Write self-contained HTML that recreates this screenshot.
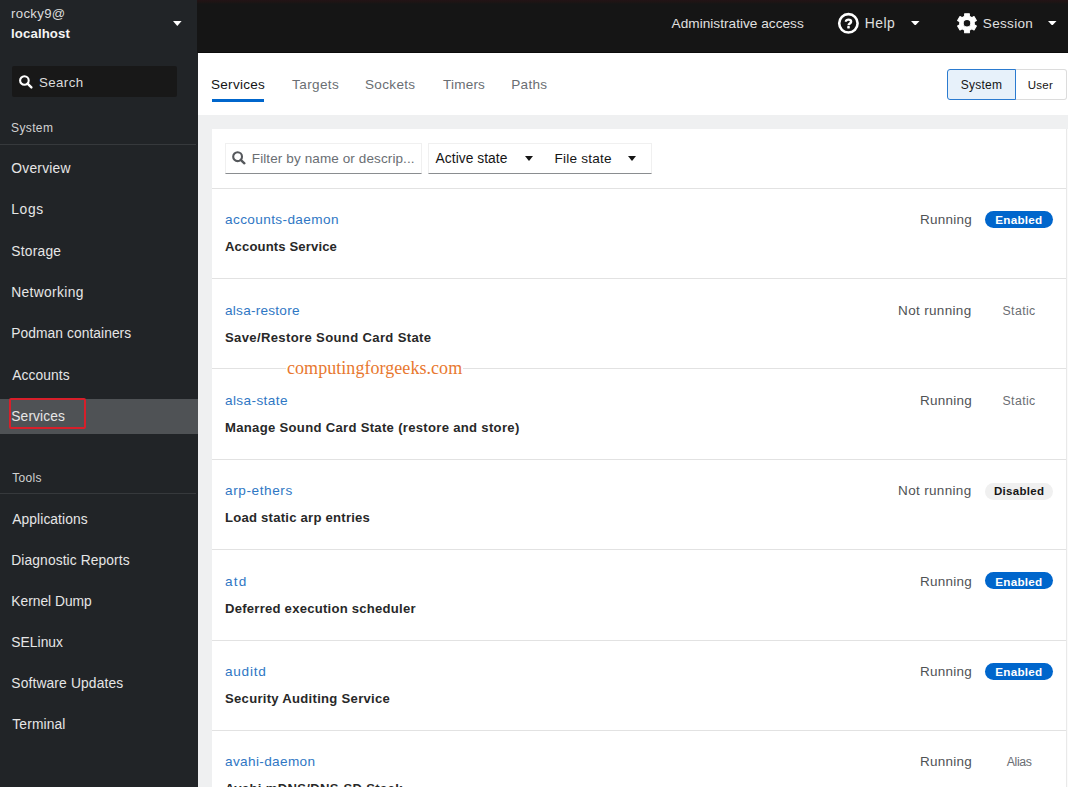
<!DOCTYPE html>
<html><head><meta charset="utf-8"><style>
html,body{margin:0;padding:0;width:1068px;height:787px;overflow:hidden;background:#fff;font-family:"Liberation Sans", sans-serif}
.t{position:absolute;white-space:nowrap;line-height:1}
</style></head><body>
<div style="position:absolute;left:0px;top:0px;width:198px;height:787px;background:#212427;"></div>
<div class="t" style="left:11.00px;top:7.00px;font-size:13.2px;color:#dcdcdc;font-weight:400;letter-spacing:0.333px;">rocky9@</div>
<div class="t" style="left:11.00px;top:27.00px;font-size:13.2px;color:#f4f4f4;font-weight:700;letter-spacing:0.125px;">localhost</div>
<svg style="position:absolute;left:173.3px;top:21px" width="8.6" height="5" viewBox="0 0 8.6 5"><path d="M0 0H8.6L4.3 5Z" fill="#fff"/></svg>
<div style="position:absolute;left:12px;top:66px;width:165px;height:31px;background:#181818;border-radius:2px"></div>
<svg style="position:absolute;left:18px;top:74px" width="16" height="16" viewBox="0 0 16 16"><circle cx="6.4" cy="6.5" r="4.3" fill="none" stroke="#fff" stroke-width="2.1"/><path d="M9.5 9.6L13.4 13.4" stroke="#fff" stroke-width="2.4" stroke-linecap="round"/></svg>
<div class="t" style="left:39.00px;top:76.00px;font-size:13.3px;color:#dcdcdc;font-weight:400;letter-spacing:0.400px;">Search</div>
<div class="t" style="left:11.00px;top:122.00px;font-size:12px;color:#d2d2d2;font-weight:400;letter-spacing:0.380px;">System</div>
<div style="position:absolute;left:0px;top:144px;width:196px;height:1px;background:#36393c;"></div>
<div style="position:absolute;left:0px;top:399px;width:198px;height:35px;background:#4f5255;"></div>
<div class="t" style="left:11.30px;top:162.00px;font-size:13.8px;color:#e6e6e6;font-weight:400;letter-spacing:0.243px;">Overview</div>
<div class="t" style="left:11.30px;top:203.00px;font-size:13.8px;color:#e6e6e6;font-weight:400;letter-spacing:0.633px;">Logs</div>
<div class="t" style="left:11.30px;top:245.00px;font-size:13.8px;color:#e6e6e6;font-weight:400;letter-spacing:0.233px;">Storage</div>
<div class="t" style="left:11.30px;top:286.00px;font-size:13.8px;color:#e6e6e6;font-weight:400;letter-spacing:0.333px;">Networking</div>
<div class="t" style="left:11.30px;top:327.00px;font-size:13.8px;color:#e6e6e6;font-weight:400;letter-spacing:0.062px;">Podman containers</div>
<div class="t" style="left:12.30px;top:369.00px;font-size:13.8px;color:#e6e6e6;font-weight:400;letter-spacing:0.086px;">Accounts</div>
<div class="t" style="left:11.30px;top:410.00px;font-size:13.8px;color:#e6e6e6;font-weight:400;letter-spacing:0.114px;">Services</div>
<div style="position:absolute;left:9px;top:398px;width:73px;height:27px;background:transparent;border:2px solid #d71f2a;border-radius:2px"></div>
<div class="t" style="left:12.30px;top:472.00px;font-size:12px;color:#d2d2d2;font-weight:400;letter-spacing:0.300px;">Tools</div>
<div style="position:absolute;left:0px;top:493px;width:196px;height:1px;background:#36393c;"></div>
<div class="t" style="left:12.30px;top:513.00px;font-size:13.8px;color:#e6e6e6;font-weight:400;letter-spacing:0.082px;">Applications</div>
<div class="t" style="left:11.30px;top:554.00px;font-size:13.8px;color:#e6e6e6;font-weight:400;letter-spacing:0.106px;">Diagnostic Reports</div>
<div class="t" style="left:11.30px;top:595.00px;font-size:13.8px;color:#e6e6e6;font-weight:400;letter-spacing:-0.010px;">Kernel Dump</div>
<div class="t" style="left:11.30px;top:636.00px;font-size:13.8px;color:#e6e6e6;font-weight:400;letter-spacing:0.050px;">SELinux</div>
<div class="t" style="left:11.30px;top:677.00px;font-size:13.8px;color:#e6e6e6;font-weight:400;letter-spacing:0.147px;">Software Updates</div>
<div class="t" style="left:12.30px;top:718.00px;font-size:13.8px;color:#e6e6e6;font-weight:400;letter-spacing:0.143px;">Terminal</div>
<div style="position:absolute;left:197px;top:0px;width:871px;height:53px;background:#151515;"></div>
<div style="position:absolute;left:197px;top:0px;width:871px;height:4px;background:linear-gradient(#221316,#1f1414 40%,#151515);"></div>
<div style="position:absolute;left:198px;top:52px;width:870px;height:1px;background:#0c0c0c;"></div>
<div class="t" style="left:671.60px;top:17.00px;font-size:13.6px;color:#e0e0e0;font-weight:400;letter-spacing:0.035px;">Administrative access</div>
<svg style="position:absolute;left:837px;top:12px" width="23" height="23" viewBox="0 0 23 23"><circle cx="11.4" cy="11.35" r="9.2" fill="none" stroke="#fff" stroke-width="2.6"/><path d="M8.9 9.8C8.9 8.3 10 7.6 11.5 7.6C13 7.6 14.1 8.5 14.1 9.7C14.1 11.4 11.6 11.5 11.6 13.3" fill="none" stroke="#fff" stroke-width="2.4"/><rect x="10.2" y="14" width="2.6" height="2.4" rx="0.4" fill="#fff"/></svg>
<div class="t" style="left:864.70px;top:17.00px;font-size:13.86px;color:#e0e0e0;font-weight:400;letter-spacing:0.500px;">Help</div>
<svg style="position:absolute;left:911.2px;top:20.5px" width="8.5" height="4.6" viewBox="0 0 8.5 4.6"><path d="M0 0H8.5L4.25 4.6Z" fill="#fff"/></svg>
<svg style="position:absolute;left:957.4px;top:13px" width="20" height="21" viewBox="0 0 20 21"><path d="M7.65 3.34 L7.65 0.79 L12.35 0.79 L12.35 3.34 L13.65 3.93 L14.81 4.76 L17.02 3.48 L19.37 7.55 L17.16 8.83 L17.30 10.25 L17.16 11.67 L19.37 12.95 L17.02 17.02 L14.81 15.74 L13.65 16.57 L12.35 17.16 L12.35 19.71 L7.65 19.71 L7.65 17.16 L6.35 16.57 L5.19 15.74 L2.98 17.02 L0.63 12.95 L2.84 11.67 L2.70 10.25 L2.84 8.83 L0.63 7.55 L2.98 3.48 L5.19 4.76 L6.35 3.93Z M10 6.4A3.85 3.85 0 1 0 10 14.1A3.85 3.85 0 1 0 10 6.4Z" fill="#fff" fill-rule="evenodd" stroke="#fff" stroke-width="1.1" stroke-linejoin="round"/></svg>
<div class="t" style="left:982.80px;top:17.00px;font-size:13.5px;color:#e0e0e0;font-weight:400;letter-spacing:0.333px;">Session</div>
<svg style="position:absolute;left:1048.3px;top:20.5px" width="8.5" height="4.6" viewBox="0 0 8.5 4.6"><path d="M0 0H8.5L4.25 4.6Z" fill="#fff"/></svg>
<div style="position:absolute;left:198px;top:53px;width:870px;height:62px;background:#fff;"></div>
<div style="position:absolute;left:198px;top:115px;width:870px;height:672px;background:#eff0f1;"></div>
<div class="t" style="left:211.00px;top:78.00px;font-size:13.56px;color:#151515;font-weight:400;letter-spacing:0.271px;">Services</div>
<div style="position:absolute;left:212px;top:98.5px;width:52px;height:3px;background:#0066cc;"></div>
<div class="t" style="left:292.10px;top:78.00px;font-size:13.56px;color:#6a6e73;font-weight:400;letter-spacing:0.367px;">Targets</div>
<div class="t" style="left:365.00px;top:78.00px;font-size:13.56px;color:#6a6e73;font-weight:400;letter-spacing:0.317px;">Sockets</div>
<div class="t" style="left:443.10px;top:78.00px;font-size:13.56px;color:#6a6e73;font-weight:400;letter-spacing:0.180px;">Timers</div>
<div class="t" style="left:511.20px;top:78.00px;font-size:13.56px;color:#6a6e73;font-weight:400;letter-spacing:0.325px;">Paths</div>
<div style="position:absolute;left:947px;top:69px;width:67px;height:29px;background:#e7f1fa;border:1px solid #2b7bd0;border-radius:3px 0 0 3px;z-index:2"></div>
<div style="position:absolute;left:1015px;top:69px;width:51px;height:29px;background:#fff;border:1px solid #dcdcdc;border-left:none;border-radius:0 3px 3px 0"></div>
<div class="t" style="left:960.70px;top:79.00px;font-size:12px;color:#151515;font-weight:400;letter-spacing:0.260px;z-index:3">System</div>
<div class="t" style="left:1027.80px;top:80.00px;font-size:11.5px;color:#151515;font-weight:400;letter-spacing:0.233px;">User</div>
<div style="position:absolute;left:212px;top:129px;width:855px;height:658px;background:#fff;"></div>
<div style="position:absolute;left:1067px;top:129px;width:1px;height:658px;background:#fbfbfb;"></div>
<div style="position:absolute;left:1066px;top:129px;width:1px;height:658px;background:#e9e9e9;"></div>
<div style="position:absolute;left:225px;top:143px;width:195px;height:29px;background:transparent;border:1px solid #f0f0f0;border-bottom:1px solid #8a8d90"></div>
<svg style="position:absolute;left:231.5px;top:150.5px" width="15" height="15" viewBox="0 0 15 15"><circle cx="5.6" cy="5.7" r="4.4" fill="none" stroke="#55585c" stroke-width="2.1"/><path d="M8.7 8.8L12.4 12.3" stroke="#55585c" stroke-width="2.4" stroke-linecap="round"/></svg>
<div class="t" style="left:251.80px;top:152.00px;font-size:13.5px;color:#6a6e73;font-weight:400;letter-spacing:0.111px;">Filter by name or descrip...</div>
<div style="position:absolute;left:428px;top:143px;width:222px;height:29px;background:transparent;border:1px solid #f0f0f0;border-bottom:1px solid #8a8d90"></div>
<div class="t" style="left:435.60px;top:152.00px;font-size:13.8px;color:#151515;font-weight:400;letter-spacing:0.036px;">Active state</div>
<svg style="position:absolute;left:525px;top:155.5px" width="8" height="5" viewBox="0 0 8 5"><path d="M0 0H8L4.0 5Z" fill="#151515"/></svg>
<div class="t" style="left:554.40px;top:152.00px;font-size:13.58px;color:#151515;font-weight:400;letter-spacing:0.233px;">File state</div>
<svg style="position:absolute;left:628px;top:155.5px" width="8" height="5" viewBox="0 0 8 5"><path d="M0 0H8L4.0 5Z" fill="#151515"/></svg>
<div style="position:absolute;left:212px;top:188px;width:854px;height:1px;background:#e2e2e2;"></div>
<div class="t" style="left:225.00px;top:213.00px;font-size:13.6px;color:#2f77c4;font-weight:400;letter-spacing:0.386px;">accounts-daemon</div>
<div class="t" style="left:225.00px;top:240.00px;font-size:13.1px;color:#282828;font-weight:700;letter-spacing:0.133px;">Accounts Service</div>
<div class="t" style="left:919.90px;top:213.00px;font-size:13.5px;color:#4f5255;font-weight:400;letter-spacing:0.250px;">Running</div>
<div style="position:absolute;left:984.5px;top:211px;width:68.5px;height:17px;background:#0066cc;border-radius:9px"></div>
<div class="t" style="left:995.30px;top:214.00px;font-size:11.7px;color:#ffffff;font-weight:700;letter-spacing:0.233px;">Enabled</div>
<div style="position:absolute;left:212px;top:278px;width:854px;height:1px;background:#e2e2e2;"></div>
<div class="t" style="left:225.00px;top:304.00px;font-size:13.6px;color:#2f77c4;font-weight:400;letter-spacing:0.250px;">alsa-restore</div>
<div class="t" style="left:225.00px;top:331.00px;font-size:13.1px;color:#282828;font-weight:700;letter-spacing:0.343px;">Save/Restore Sound Card State</div>
<div class="t" style="left:898.10px;top:304.00px;font-size:13.5px;color:#4f5255;font-weight:400;letter-spacing:0.330px;">Not running</div>
<div class="t" style="left:1002.50px;top:305.00px;font-size:12.3px;color:#6a6e73;font-weight:400;letter-spacing:0.400px;">Static</div>
<div style="position:absolute;left:212px;top:368px;width:854px;height:1px;background:#e2e2e2;"></div>
<div class="t" style="left:225.00px;top:394.00px;font-size:13.6px;color:#2f77c4;font-weight:400;letter-spacing:0.389px;">alsa-state</div>
<div class="t" style="left:225.00px;top:421.00px;font-size:13.1px;color:#282828;font-weight:700;letter-spacing:0.302px;">Manage Sound Card State (restore and store)</div>
<div class="t" style="left:919.90px;top:394.00px;font-size:13.5px;color:#4f5255;font-weight:400;letter-spacing:0.250px;">Running</div>
<div class="t" style="left:1002.50px;top:395.00px;font-size:12.3px;color:#6a6e73;font-weight:400;letter-spacing:0.400px;">Static</div>
<div style="position:absolute;left:212px;top:459px;width:854px;height:1px;background:#e2e2e2;"></div>
<div class="t" style="left:225.00px;top:484.00px;font-size:13.6px;color:#2f77c4;font-weight:400;letter-spacing:0.589px;">arp-ethers</div>
<div class="t" style="left:225.00px;top:511.00px;font-size:13.1px;color:#282828;font-weight:700;letter-spacing:0.236px;">Load static arp entries</div>
<div class="t" style="left:898.10px;top:484.00px;font-size:13.5px;color:#4f5255;font-weight:400;letter-spacing:0.330px;">Not running</div>
<div style="position:absolute;left:984.5px;top:483px;width:68.5px;height:17px;background:#f0f0f0;border-radius:9px"></div>
<div class="t" style="left:994.00px;top:486.00px;font-size:11.5px;color:#151515;font-weight:700;letter-spacing:0.286px;">Disabled</div>
<div style="position:absolute;left:212px;top:549px;width:854px;height:1px;background:#e2e2e2;"></div>
<div class="t" style="left:225.00px;top:575.00px;font-size:13.6px;color:#2f77c4;font-weight:400;letter-spacing:1.250px;">atd</div>
<div class="t" style="left:225.00px;top:602.00px;font-size:13.1px;color:#282828;font-weight:700;letter-spacing:0.237px;">Deferred execution scheduler</div>
<div class="t" style="left:919.90px;top:575.00px;font-size:13.5px;color:#4f5255;font-weight:400;letter-spacing:0.250px;">Running</div>
<div style="position:absolute;left:984.5px;top:572px;width:68.5px;height:17px;background:#0066cc;border-radius:9px"></div>
<div class="t" style="left:995.30px;top:576.00px;font-size:11.7px;color:#ffffff;font-weight:700;letter-spacing:0.233px;">Enabled</div>
<div style="position:absolute;left:212px;top:640px;width:854px;height:1px;background:#e2e2e2;"></div>
<div class="t" style="left:225.00px;top:665.00px;font-size:13.6px;color:#2f77c4;font-weight:400;letter-spacing:0.740px;">auditd</div>
<div class="t" style="left:225.00px;top:692.00px;font-size:13.1px;color:#282828;font-weight:700;letter-spacing:0.279px;">Security Auditing Service</div>
<div class="t" style="left:919.90px;top:665.00px;font-size:13.5px;color:#4f5255;font-weight:400;letter-spacing:0.250px;">Running</div>
<div style="position:absolute;left:984.5px;top:663px;width:68.5px;height:17px;background:#0066cc;border-radius:9px"></div>
<div class="t" style="left:995.30px;top:666.00px;font-size:11.7px;color:#ffffff;font-weight:700;letter-spacing:0.233px;">Enabled</div>
<div style="position:absolute;left:212px;top:730px;width:854px;height:1px;background:#e2e2e2;"></div>
<div class="t" style="left:225.00px;top:755.00px;font-size:13.6px;color:#2f77c4;font-weight:400;letter-spacing:0.355px;">avahi-daemon</div>
<div class="t" style="left:225.00px;top:782.00px;font-size:13.1px;color:#282828;font-weight:700;letter-spacing:0.318px;">Avahi mDNS/DNS-SD Stack</div>
<div class="t" style="left:919.90px;top:755.00px;font-size:13.5px;color:#4f5255;font-weight:400;letter-spacing:0.250px;">Running</div>
<div class="t" style="left:1006.85px;top:756.00px;font-size:12.3px;color:#6a6e73;font-weight:400;letter-spacing:-0.425px;">Alias</div>
<div style="position:absolute;left:286px;top:361px;width:177px;height:17px;background:#fff;"></div>
<div class="t" style="left:287.00px;top:359.00px;font-size:18px;color:#e8782f;font-weight:400;letter-spacing:0.050px;font-family:'Liberation Serif',serif;">computingforgeeks.com</div>
</body></html>
